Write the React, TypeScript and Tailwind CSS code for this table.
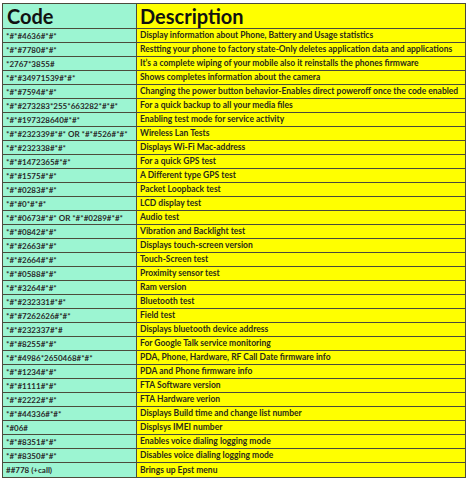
const rows: [string, string][] = [
  ['*#*#4636#*#*', 'Display information about Phone, Battery and Usage statistics'],
  ['*#*#7780#*#*', 'Restting your phone to factory state-Only deletes application data and applications'],
  ['*2767*3855#', 'It\u2019s a complete wiping of your mobile also it reinstalls the phones firmware'],
  ['*#*#34971539#*#*', 'Shows completes information about the camera'],
  ['*#*#7594#*#*', 'Changing the power button behavior-Enables direct poweroff once the code enabled'],
  ['*#*#273283*255*663282*#*#*', 'For a quick backup to all your media files'],
  ['*#*#197328640#*#*', 'Enabling test mode for service activity'],
  ['*#*#232339#*#* OR *#*#526#*#*', 'Wireless Lan Tests'],
  ['*#*#232338#*#*', 'Displays Wi-Fi Mac-address'],
  ['*#*#1472365#*#*', 'For a quick GPS test'],
  ['*#*#1575#*#*', 'A Different type GPS test'],
  ['*#*#0283#*#*', 'Packet Loopback test'],
  ['*#*#0*#*#*', 'LCD display test'],
  ['*#*#0673#*#* OR *#*#0289#*#*', 'Audio test'],
  ['*#*#0842#*#*', 'Vibration and Backlight test'],
  ['*#*#2663#*#*', 'Displays touch-screen version'],
  ['*#*#2664#*#*', 'Touch-Screen test'],
  ['*#*#0588#*#*', 'Proximity sensor test'],
  ['*#*#3264#*#*', 'Ram version'],
  ['*#*#232331#*#*', 'Bluetooth test'],
  ['*#*#7262626#*#*', 'Field test'],
  ['*#*#232337#*#', 'Displays bluetooth device address'],
  ['*#*#8255#*#*', 'For Google Talk service monitoring'],
  ['*#*#4986*2650468#*#*', 'PDA, Phone, Hardware, RF Call Date firmware info'],
  ['*#*#1234#*#*', 'PDA and Phone firmware info'],
  ['*#*#1111#*#*', 'FTA Software version'],
  ['*#*#2222#*#*', 'FTA Hardware verion'],
  ['*#*#44336#*#*', 'Displays Build time and change list number'],
  ['*#06#', 'Displsys IMEI number'],
  ['*#*#8351#*#*', 'Enables voice dialing logging mode'],
  ['*#*#8350#*#*', 'Disables voice dialing logging mode'],
  ['##778 (+call)', 'Brings up Epst menu'],
]

export default function App() {
  return (
    <div className="h-[481px] w-[474px] bg-white pl-[2px] pt-[3px]" style={{ fontFamily: 'Lato, "Noto Sans", sans-serif' }}>
      <div className="w-[464px] border border-[#4b4b3c]">
        <div className="grid h-[25px] grid-cols-[134px_1fr] border-b border-[#4b4b3c]">
          <div className="flex items-center border-r border-[#4b4b3c] bg-[#9cf5d2] pl-[4px] text-[20px] font-bold leading-none text-[#111]">Code</div>
          <div className="flex items-center bg-[#ffff00] pl-[3px] text-[20px] font-bold leading-none text-[#111]">Description</div>
        </div>
        {rows.map(([code, desc], i) => (
          <div key={i} className={`grid h-[14px] grid-cols-[134px_1fr] ${i < rows.length - 1 ? 'border-b border-[#4b4b3c]' : ''}`}>
            <div className="flex items-center border-r border-[#4b4b3c] bg-[#9cf5d2] pl-[3px] text-[8px] font-bold leading-none text-[#2a2a2a] whitespace-nowrap">{code}</div>
            <div className="flex items-center bg-[#ffff00] pl-[3px] text-[8.5px] font-bold leading-none text-[#2a2a1a] whitespace-nowrap overflow-hidden">{desc}</div>
          </div>
        ))}
      </div>
    </div>
  )
}
